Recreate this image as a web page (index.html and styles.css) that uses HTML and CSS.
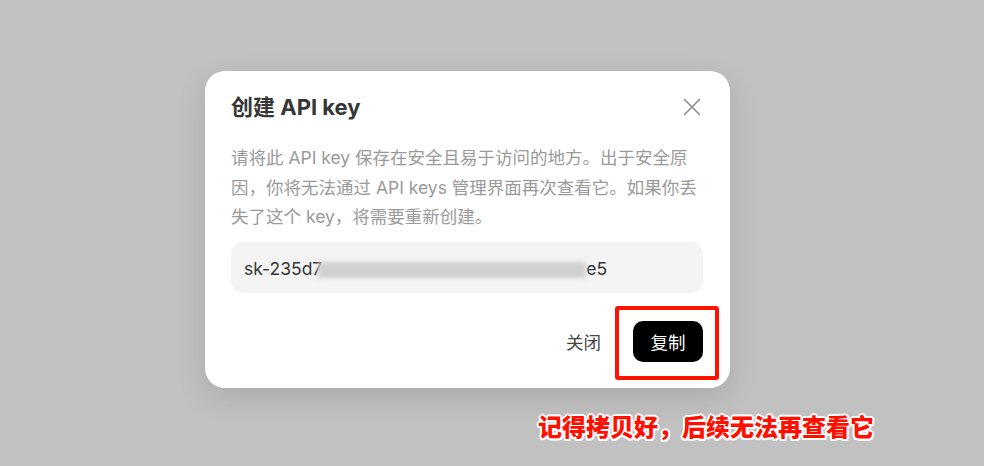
FILE: index.html
```html
<!DOCTYPE html>
<html lang="zh-CN">
<head>
<meta charset="utf-8">
<link rel="stylesheet" href="styles.css">
</head>
<body>
<div class="stage">
  <div class="modal">
    <div class="modal-head">
      <h2 class="modal-title">创建 API key</h2>
      <button class="close-btn" aria-label="关闭">
        <svg width="18" height="18" viewBox="0 0 18 18"><path d="M1.5 1.5 L16.5 16.5 M16.5 1.5 L1.5 16.5" stroke="#8a8a8a" stroke-width="1.5" fill="none" stroke-linecap="round"/></svg>
      </button>
    </div>
    <p class="modal-desc">请将此 API key 保存在安全且易于访问的地方。出于安全原因，你将无法通过 API keys 管理界面再次查看它。如果你丢失了这个 key，将需要重新创建。</p>
    <div class="key-box"><span>sk-235d7</span><span class="key-blur"></span><span>e5</span></div>
    <div class="modal-foot">
      <button class="btn-text">关闭</button>
      <button class="btn-primary">复制</button>
      <div class="highlight"></div>
    </div>
  </div>
  <div class="note">记得拷贝好，后续无法再查看它</div>
</div>
</body>
</html>
```
FILE: styles.css
```css
* { box-sizing: border-box; }
html, body { margin: 0; padding: 0; }
body {
  width: 984px;
  height: 466px;
  background: #c1c1c1;
  font-family: "Inter", "Noto Sans CJK SC", sans-serif;
  overflow: hidden;
}
.stage {
  position: relative;
  width: 984px;
  height: 466px;
  padding: 71px 0 0 205px;
}
.modal {
  width: 525px;
  height: 317px;
  background: #fff;
  border-radius: 20px;
  box-shadow: 0 10px 30px rgba(0,0,0,0.12);
  padding: 22px 27px 26px 26px;
  display: flex;
  flex-direction: column;
}
.modal-head {
  display: flex;
  align-items: center;
  justify-content: space-between;
  height: 28px;
}
.modal-title {
  margin: 0;
  font-size: 22px;
  font-weight: 700;
  line-height: 28px;
  color: #363636;
}
.close-btn {
  border: 0;
  background: none;
  padding: 0;
  width: 18px;
  height: 18px;
  margin-right: 2px;
  display: flex;
}
.modal-desc {
  margin: 22px 0 0;
  font-size: 17.5px;
  line-height: 29.5px;
  color: #9a9a9a;
}
.key-box {
  margin-top: 10px;
  height: 51px;
  background: #f4f4f4;
  border-radius: 12px;
  padding: 0 13px;
  display: flex;
  align-items: center;
  font-size: 17.5px;
  color: #363636;
  padding-top: 3px;
}
.key-blur {
  display: inline-block;
  width: 268px;
  height: 16px;
  background: #d0d0d0;
  filter: blur(2px);
  margin: 2px 0 0 -4px;
}
.modal-foot {
  position: relative;
  margin-top: 28px;
  display: flex;
  justify-content: flex-end;
  align-items: center;
  gap: 32px;
}
.btn-text {
  border: 0;
  background: none;
  padding: 0;
  font-family: inherit;
  font-size: 17.5px;
  color: #444;
}
.btn-primary {
  border: 0;
  background: #000;
  color: #fff;
  font-family: inherit;
  font-size: 17.5px;
  height: 41px;
  width: 70px;
  border-radius: 10px;
  padding: 0;
}
.highlight {
  position: absolute;
  right: -16px;
  top: -15px;
  width: 104px;
  height: 74px;
  border: 4px solid #ff1200;
  border-radius: 3px;
}
.note {
  position: absolute;
  left: 538px;
  top: 412px;
  font-size: 24px;
  line-height: 32px;
  font-weight: 900;
  color: #ff0f00;
  letter-spacing: 0;
  text-shadow:
    -1.5px -1.5px 0 #fff, 1.5px -1.5px 0 #fff, -1.5px 1.5px 0 #fff, 1.5px 1.5px 0 #fff,
    0 -2px 0 #fff, 0 2px 0 #fff, -2px 0 0 #fff, 2px 0 0 #fff;
}
```
